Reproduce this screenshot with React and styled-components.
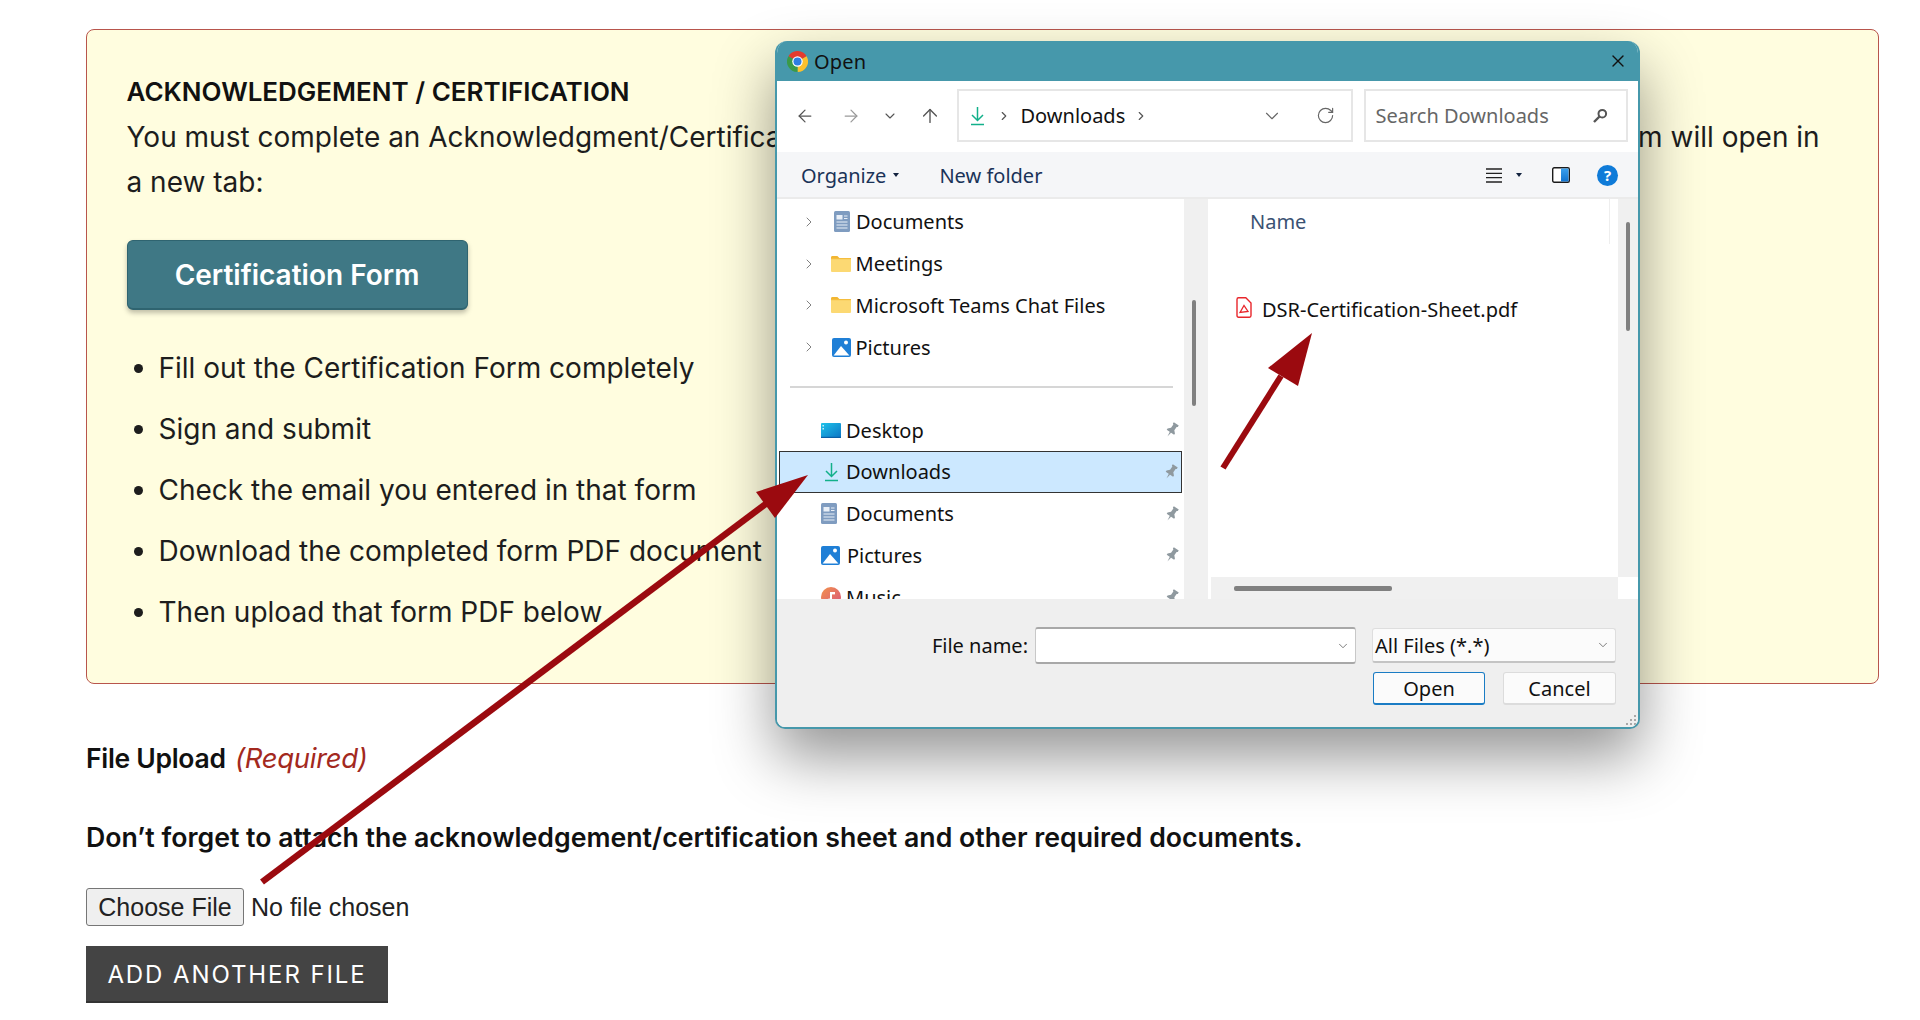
import * as React from 'react';
import styled, { createGlobalStyle } from 'styled-components';
import { ArrowLeft, ArrowRight, ArrowUp, ChevronDown, ChevronRight, RotateCw, X } from 'lucide-react';

const Global = createGlobalStyle`
	html, body {
		margin: 0;
		padding: 0;
		background: #fff;
		overflow: hidden;
	}
	* {
		box-sizing: border-box;
	}
`;

const Page = styled.div`
	position: relative;
	width: 1920px;
	height: 1020px;
	padding: 29px 41px 0 86px;
	overflow: hidden;
	font-family: Inter, 'Liberation Sans', sans-serif;
	color: #1d1d1d;
`;

const Card = styled.section`
	height: 655px;
	padding: 44px 50px 0 39.5px;
	background: #fffddf;
	border: 1.5px solid #b8554c;
	border-radius: 8px;
`;

const Heading = styled.h2`
	margin: 0;
	font-size: 26px;
	line-height: 36px;
	font-weight: 600;
	color: #111;
`;

const Lead = styled.p`
	margin: 5px 0 0;
	font-size: 28px;
	line-height: 45px;
	font-weight: 400;
`;

const FormButton = styled.a`
	display: flex;
	align-items: center;
	justify-content: center;
	width: 341px;
	height: 70px;
	margin-top: 35px;
	background: #3f7885;
	border: 1px solid #2f6470;
	border-bottom-width: 2px;
	border-radius: 6px;
	box-shadow: 0 3px 5px rgba(0, 0, 0, 0.25);
	color: #fff;
	font-size: 28px;
	font-weight: 600;
`;

const Steps = styled.ul`
	margin: 36px 0 0;
	padding: 0 0 0 32px;
	font-size: 28px;
	line-height: 45px;

	li {
		margin-bottom: 16px;
		padding-left: 0;
	}
`;

const FieldLabel = styled.div`
	margin-top: 54px;
	font-size: 26.5px;
	line-height: 40px;
	font-weight: 600;
	letter-spacing: -0.3px;
	color: #111;

	em {
		margin-left: 3px;
		font-size: 27.5px;
		font-weight: 400;
		color: #a3291e;
	}
`;

const Reminder = styled.div`
	margin-top: 39px;
	font-size: 26.7px;
	line-height: 40px;
	font-weight: 600;
	color: #111;
`;

const FileRow = styled.div`
	display: flex;
	align-items: center;
	gap: 7px;
	margin-top: 31px;
	font-family: 'Liberation Sans', Arial, sans-serif;
	font-size: 25px;
	color: #222;
`;

const ChooseButton = styled.div`
	display: flex;
	align-items: center;
	justify-content: center;
	width: 158px;
	height: 38px;
	background: #efefef;
	border: 1.5px solid #767676;
	border-radius: 3px;
`;

const AddButton = styled.div`
	display: flex;
	align-items: center;
	justify-content: center;
	width: 302px;
	height: 57px;
	margin-top: 20px;
	padding-top: 2px;
	background: #444;
	border-bottom: 2px solid #333;
	color: #fff;
	font-size: 24px;
	letter-spacing: 1.9px;
`;

/* windows file dialog, lies over the page */
const Dialog = styled.div`
	position: absolute;
	left: 775px;
	top: 41px;
	display: flex;
	flex-direction: column;
	width: 865px;
	height: 688px;
	background: #fff;
	border: 2px solid #4698ab;
	border-top: 0;
	border-radius: 12px 12px 10px 10px;
	box-shadow: 0 28px 60px rgba(0, 0, 0, 0.42);
	font-family: 'Noto Sans', 'Open Sans', sans-serif;
	font-size: 20px;
	color: #111;
	overflow: hidden;
`;

const TitleBar = styled.div`
	display: flex;
	align-items: center;
	gap: 6px;
	flex: none;
	height: 40px;
	margin: 0 -2px;
	padding: 0 12px 0 12px;
	background: #4698ab;

	span {
		flex: 1;
		letter-spacing: 0.2px;
	}
`;

const NavRow = styled.div`
	display: flex;
	align-items: center;
	flex: none;
	height: 71px;
	padding: 8px 10px 10px 16px;
	color: #555;
`;

const NavIcon = styled.div`
	display: flex;
	justify-content: center;
	width: ${(p) => p.$w || 24}px;
	margin-right: ${(p) => p.$gap || 0}px;
	color: ${(p) => p.$color || '#555'};
`;

const AddressBox = styled.div`
	display: flex;
	align-items: center;
	width: 396px;
	height: 53px;
	margin-left: 11.5px;
	padding: 0 16px 0 10px;
	border: 2px solid #e6e6e6;
	color: #111;
`;

const SearchBox = styled.div`
	display: flex;
	align-items: center;
	justify-content: space-between;
	width: 264px;
	height: 53px;
	margin-left: 11px;
	padding: 0 18px 0 10px;
	border: 2px solid #e6e6e6;
	color: #666;
`;

const Toolbar = styled.div`
	display: flex;
	align-items: center;
	flex: none;
	height: 47px;
	padding: 1px 20px 0 24px;
	background: #f5f6f8;
	border-bottom: 2px solid #ebebeb;
	color: #1a3358;
`;

const Caret = styled.i`
	display: block;
	width: 0;
	height: 0;
	border-left: 3.5px solid transparent;
	border-right: 3.5px solid transparent;
	border-top: 4px solid #13233f;
`;

const ToolLabel = styled.span`
	margin-right: ${(p) => p.$gap}px;
`;

const Spacer = styled.div`
	flex: 1;
`;

const HelpBadge = styled.span`
	display: flex;
	align-items: center;
	justify-content: center;
	width: 21px;
	height: 21px;
	border-radius: 50%;
	background: #0f7bd8;
	color: #fff;
	font-size: 15px;
	font-weight: 700;
`;

const Panes = styled.div`
	display: flex;
	flex: none;
	height: 400px;
`;

const Sidebar = styled.div`
	width: 407px;
	padding-top: 2px;
	overflow: hidden;
`;

const TreeRow = styled.div`
	display: flex;
	align-items: center;
	height: 41.8px;
	padding-left: 23.5px;
	color: #777;
`;

const QuickRow = styled.div`
	display: flex;
	align-items: center;
	height: 41.8px;
	margin: 0 2px;
	padding: 0 2px 0 ${(p) => (p.$active ? 43 : 42)}px;
	background: ${(p) => (p.$active ? '#cce8ff' : 'transparent')};
	border: ${(p) => (p.$active ? '1.5px solid #333' : '0')};
`;

const RowText = styled.span`
	flex: 1;
	margin-left: ${(p) => p.$gap}px;
	color: #111;
`;

const Divider = styled.hr`
	width: 383px;
	height: 2px;
	margin: 18px 0 21px 13px;
	background: #d6d6d6;
	border: 0;
`;

const ScrollTrack = styled.div`
	position: relative;
	flex: none;
	width: ${(p) => p.$w}px;
	background: #f0f0f0;
`;

const ScrollThumb = styled.div`
	position: absolute;
	left: ${(p) => p.$left}px;
	top: ${(p) => p.$top}px;
	width: 4px;
	height: ${(p) => p.$h}px;
	background: #808080;
	border-radius: 2px;
`;

const Files = styled.div`
	display: flex;
	flex-direction: column;
	flex: 1;
	min-width: 0;
`;

const FileList = styled.div`
	flex: 1;
	display: flex;
`;

const FileColumn = styled.div`
	flex: 1;
	min-width: 0;
`;

const NameHeader = styled.div`
	display: flex;
	align-items: center;
	height: 45px;
	padding-left: 42px;
	border-right: 1.5px solid #eee;
	margin-right: 8px;
	color: #3a5273;
`;

const PdfRow = styled.div`
	display: flex;
	align-items: center;
	gap: 10px;
	margin-top: 52px;
	padding-left: 28px;
`;

const BottomBar = styled.div`
	position: relative;
	display: flex;
	flex: none;
	height: 22px;
`;

const HorizontalTrack = styled.div`
	position: relative;
	flex: 1;
	margin-left: 3px;
	background: #f0f0f0;
`;

const HorizontalThumb = styled.div`
	position: absolute;
	left: 23px;
	top: 9px;
	width: 158px;
	height: 5px;
	background: #808080;
	border-radius: 2px;
`;

const Footer = styled.div`
	position: relative;
	flex: 1;
	display: flex;
	flex-direction: column;
	align-items: flex-end;
	padding: 28px 22px 0 0;
	background: #efefef;
`;

const FooterRow = styled.div`
	display: flex;
	align-items: center;
	gap: ${(p) => p.$gap}px;
	margin-top: ${(p) => p.$top || 0}px;
`;

const NameInput = styled.div`
	display: flex;
	align-items: center;
	justify-content: flex-end;
	width: 321px;
	height: 37px;
	margin-left: -9px;
	padding-right: 5px;
	background: #fff;
	border: 1px solid #c8c8c8;
	border-top: 2px solid #a8a8a8;
	border-bottom: 2px solid #a8a8a8;
	border-radius: 3px;
	color: #555;
`;

const TypeSelect = styled.div`
	display: flex;
	align-items: center;
	justify-content: space-between;
	width: 244px;
	height: 35px;
	padding: 0 5px 0 2px;
	background: #fbfbfb;
	border: 1px solid #dedede;
	border-bottom: 2px solid #c4c4c4;
	border-radius: 3px;
`;

const DialogButton = styled.div`
	display: flex;
	align-items: center;
	justify-content: center;
	width: ${(p) => p.$w}px;
	height: 33px;
	background: #fbfbfb;
	border: ${(p) => (p.$primary ? '1.5px solid #1a7cc4' : '1px solid #dcdcdc')};
	border-bottom-width: 2px;
	border-radius: 3px;
`;

const Grip = styled.svg`
	position: absolute;
	right: 1px;
	bottom: 1px;
`;

const ArrowLayer = styled.svg`
	position: absolute;
	left: 0;
	top: 0;
	pointer-events: none;
`;

function ChromeLogo() {
	return (
		<svg width="21" height="21" viewBox="0 0 24 24">
			<path d="M12 12 1.6 6A12 12 0 0 1 22.4 6Z" fill="#e33b2e" />
			<path d="M12 12 22.4 6A12 12 0 0 1 12 24Z" fill="#fbc02d" />
			<path d="M12 12 12 24A12 12 0 0 1 1.6 6Z" fill="#3a9a48" />
			<circle cx="12" cy="12" r="6" fill="#fff" />
			<circle cx="12" cy="12" r="4.6" fill="#2f7de1" />
		</svg>
	);
}

function DownloadIcon({ size = 17 }) {
	return (
		<svg width={size} height={size + 3} viewBox="0 0 17 20" fill="none" stroke="#12b08a" strokeWidth="1.5">
			<path d="M8.5 1v13M3 9l5.5 5.5L14 9" />
			<path d="M2 18.5h13" />
		</svg>
	);
}

function DocIcon() {
	return (
		<svg width="16" height="21" viewBox="0 0 16 21">
			<rect width="16" height="21" rx="1.5" fill="#7f9cc0" />
			<rect x="2.5" y="4" width="6" height="4.5" fill="#e9eff7" />
			<path d="M10 5h3.5M10 7.5h3.5M2.5 11h11M2.5 14h11M2.5 17h11" stroke="#e9eff7" strokeWidth="1.2" />
		</svg>
	);
}

function FolderIcon() {
	return (
		<svg width="20" height="16" viewBox="0 0 20 16">
			<path d="M0 1.5C0 .7.6 0 1.4 0h5l2 2H0z" fill="#f2b632" />
			<rect y="2" width="20" height="14" rx="1" fill="#fcd973" />
			<rect y="2" width="20" height="1.2" fill="#f5bd3d" />
		</svg>
	);
}

function PicturesIcon() {
	return (
		<svg width="19" height="19" viewBox="0 0 19 19">
			<rect width="19" height="19" rx="2" fill="#1f7fd6" />
			<circle cx="14" cy="4.6" r="2" fill="#fff" />
			<path d="M1.6 17.4 9 8l8.4 9.4z" fill="#fff" />
		</svg>
	);
}

function DesktopIcon() {
	return (
		<svg width="20" height="15" viewBox="0 0 20 15">
			<defs>
				<linearGradient id="desk" x1="0" y1="0" x2="1" y2="1">
					<stop offset="0" stopColor="#1fc3ea" />
					<stop offset="1" stopColor="#0c74c4" />
				</linearGradient>
			</defs>
			<rect width="20" height="15" rx="1" fill="url(#desk)" />
			<path d="M0 13.8h20V15H0z" fill="#0a5fa6" />
			<path d="M1.5 2h1.4v1.4H1.5zM1.5 5h1.4v1.4H1.5z" fill="#d5f4fc" />
		</svg>
	);
}

function MusicIcon() {
	return (
		<svg width="20" height="20" viewBox="0 0 20 20">
			<defs>
				<linearGradient id="mus" x1="0" y1="0" x2="1" y2="1">
					<stop offset="0" stopColor="#f2924c" />
					<stop offset="1" stopColor="#d8557c" />
				</linearGradient>
			</defs>
			<circle cx="10" cy="10" r="10" fill="url(#mus)" />
			<path d="M10 5v8.5" stroke="#fff" strokeWidth="2" />
			<path d="M10 5h4v2.4h-4z" fill="#fff" />
			<circle cx="8.4" cy="13.6" r="2.2" fill="#fff" />
		</svg>
	);
}

function PinIcon({ color = '#8f999f' }) {
	return (
		<svg width="16" height="16" viewBox="0 0 16 16" fill={color}>
			<g transform="rotate(35 8 8)">
				<path d="M5 .5h6v1.700l-1 .6v4l2.500 2.500v1.500h-9V9.300L6 6.800v-4l-1-.6z" />
				<path d="M7.200 10.500h1.600L8 16z" />
			</g>
		</svg>
	);
}

function PdfIcon() {
	return (
		<svg width="16" height="21" viewBox="0 0 16 21" fill="none" stroke="#e8262b" strokeWidth="1.4" style={{ marginTop: -5 }}>
			<path d="M1 2.500C1 1.500 1.700.8 2.500.8h7.300L15 6v12.500c0 .9-.7 1.700-1.500 1.700h-11c-.8 0-1.500-.8-1.500-1.700z" />
			<path d="M4 15.500 8 8.500l4 6-8 1z" strokeWidth="1.300" />
		</svg>
	);
}

function SearchIcon() {
	return (
		<svg width="16" height="16" viewBox="0 0 16 16" fill="none" stroke="#555" strokeWidth="2">
			<circle cx="10.300" cy="5.700" r="3.800" />
			<path d="M7.500 8.500 2 14" strokeWidth="2.400" />
		</svg>
	);
}

function ViewIcon() {
	return (
		<svg width="16" height="15" viewBox="0 0 16 15" stroke="#222" strokeWidth="1.3">
			<path d="M0 1h16M0 5.300h16M0 9.600h16M0 14h16" />
		</svg>
	);
}

function PaneIcon() {
	return (
		<svg width="18" height="16" viewBox="0 0 18 16">
			<defs>
				<linearGradient id="pane" x1="0" y1="0" x2="0" y2="1">
					<stop offset="0" stopColor="#3aa0ee" />
					<stop offset="1" stopColor="#1173cf" />
				</linearGradient>
			</defs>
			<rect x=".7" y=".7" width="16.600" height="14.600" rx="1.500" fill="#fff" stroke="#1b1b1b" strokeWidth="1.400" />
			<rect x="9" y="1.500" width="7.500" height="13" fill="url(#pane)" />
		</svg>
	);
}

const treeItems = [
	{ label: 'Documents', icon: <DocIcon />, gap: 6.5, pad: 17 },
	{ label: 'Meetings', icon: <FolderIcon />, gap: 5, pad: 14 },
	{ label: 'Microsoft Teams Chat Files', icon: <FolderIcon />, gap: 5, pad: 14 },
	{ label: 'Pictures', icon: <PicturesIcon />, gap: 5, pad: 15 },
];

const quickItems = [
	{ label: 'Desktop', icon: <DesktopIcon />, gap: 5 },
	{ label: 'Downloads', icon: <DownloadIcon />, gap: 6, active: true },
	{ label: 'Documents', icon: <DocIcon />, gap: 9 },
	{ label: 'Pictures', icon: <PicturesIcon />, gap: 7 },
	{ label: 'Music', icon: <MusicIcon />, gap: 5 },
];

const steps = [
	'Fill out the Certification Form completely',
	'Sign and submit',
	'Check the email you entered in that form',
	'Download the completed form PDF document',
	'Then upload that form PDF below',
];

export default function App() {
	return (
		<Page>
			<Global />
			<Card>
				<Heading>ACKNOWLEDGEMENT / CERTIFICATION</Heading>
				<Lead>
					You must complete an Acknowledgment/Certification Form and attach it to your upload below as one PDF. This form will open in a new tab:
				</Lead>
				<FormButton>Certification Form</FormButton>
				<Steps>
					{steps.map((step) => (
						<li key={step}>{step}</li>
					))}
				</Steps>
			</Card>
			<FieldLabel>
				File Upload <em>(Required)</em>
			</FieldLabel>
			<Reminder>Don’t forget to attach the acknowledgement/certification sheet and other required documents.</Reminder>
			<FileRow>
				<ChooseButton>Choose File</ChooseButton>
				<span>No file chosen</span>
			</FileRow>
			<AddButton>ADD ANOTHER FILE</AddButton>

			<Dialog>
				<TitleBar>
					<ChromeLogo />
					<span>Open</span>
					<X size={20} color="#111" strokeWidth={1.6} />
				</TitleBar>
				<NavRow>
					<NavIcon $gap={22}><ArrowLeft size={20} strokeWidth={1.5} /></NavIcon>
					<NavIcon $gap={19} $color="#9a9a9a"><ArrowRight size={20} strokeWidth={1.5} /></NavIcon>
					<NavIcon $w={16} $gap={20}><ChevronDown size={16} strokeWidth={1.6} /></NavIcon>
					<NavIcon $gap={3}><ArrowUp size={22} strokeWidth={1.5} /></NavIcon>
					<AddressBox>
						<DownloadIcon />
						<ChevronRight size={14} color="#555" strokeWidth={2} style={{ margin: '0 10px 0 11px' }} />
						<span>Downloads</span>
						<ChevronRight size={14} color="#555" strokeWidth={2} style={{ marginLeft: 9 }} />
						<Spacer />
						<ChevronDown size={22} color="#666" strokeWidth={1.2} style={{ marginRight: 33 }} />
						<RotateCw size={19} color="#666" strokeWidth={1.5} />
					</AddressBox>
					<SearchBox>
						<span>Search Downloads</span>
						<SearchIcon />
					</SearchBox>
				</NavRow>
				<Toolbar>
					<ToolLabel $gap={7}>Organize</ToolLabel>
					<Caret />
					<ToolLabel $gap={0} style={{ marginLeft: 40 }}>New folder</ToolLabel>
					<Spacer />
					<ViewIcon />
					<div style={{ width: 14 }} />
					<Caret />
					<div style={{ width: 30 }} />
					<PaneIcon />
					<div style={{ width: 27 }} />
					<HelpBadge>?</HelpBadge>
				</Toolbar>
				<Panes>
					<Sidebar>
						{treeItems.map((item) => (
							<TreeRow key={item.label}>
								<ChevronRight size={16} strokeWidth={1.4} />
								<div style={{ width: item.pad }} />
								{item.icon}
								<RowText $gap={item.gap}>{item.label}</RowText>
							</TreeRow>
						))}
						<Divider />
						{quickItems.map((item) => (
							<QuickRow key={item.label} $active={item.active}>
								{item.icon}
								<RowText $gap={item.gap}>{item.label}</RowText>
								<PinIcon />
							</QuickRow>
						))}
					</Sidebar>
					<ScrollTrack $w={24}>
						<ScrollThumb $left={8} $top={101} $h={106} />
					</ScrollTrack>
					<Files>
						<FileList>
							<FileColumn>
								<NameHeader>Name</NameHeader>
								<PdfRow>
									<PdfIcon />
									<span>DSR-Certification-Sheet.pdf</span>
								</PdfRow>
							</FileColumn>
							<ScrollTrack $w={20}>
								<ScrollThumb $left={8} $top={23} $h={109} />
							</ScrollTrack>
						</FileList>
						<BottomBar>
							<HorizontalTrack>
								<HorizontalThumb />
							</HorizontalTrack>
							<div style={{ width: 20 }} />
						</BottomBar>
					</Files>
				</Panes>
				<Footer>
					<FooterRow $gap={16}>
						<span style={{ marginRight: 0 }}>File name:</span>
						<NameInput><ChevronDown size={14} strokeWidth={1.3} /></NameInput>
						<TypeSelect>
							<span>All Files (*.*)</span>
							<ChevronDown size={14} color="#555" strokeWidth={1.3} />
						</TypeSelect>
					</FooterRow>
					<FooterRow $gap={18} $top={8}>
						<DialogButton $w={112} $primary>Open</DialogButton>
						<DialogButton $w={113}>Cancel</DialogButton>
					</FooterRow>
					<Grip width="12" height="12" viewBox="0 0 12 12" fill="#a8a8a8">
						<path d="M9 1h2v2H9zM5 5h2v2H5zM9 5h2v2H9zM1 9h2v2H1zM5 9h2v2H5zM9 9h2v2H9z" />
					</Grip>
				</Footer>
			</Dialog>

			<ArrowLayer width="1920" height="1020" viewBox="0 0 1920 1020">
				<path d="M262 882 767 503" fill="none" stroke="#9b0a0f" strokeWidth="6.5" />
				<path d="M808 475 756 492 775 518z" fill="#9b0a0f" />
				<path d="M1223 468 1281 376" fill="none" stroke="#9b0a0f" strokeWidth="6" />
				<path d="M1312 333 1268 368 1298 386z" fill="#9b0a0f" />
			</ArrowLayer>
		</Page>
	);
}
